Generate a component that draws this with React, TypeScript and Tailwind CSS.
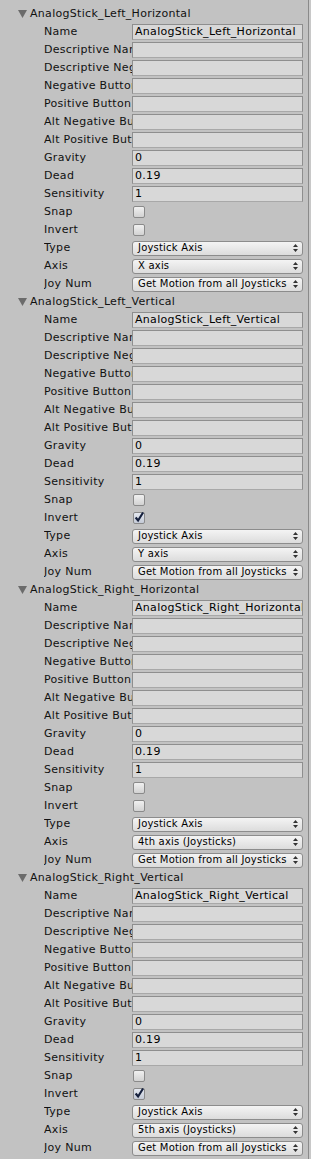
import React from 'react';

type Axis = {
  name: string;
  invert: boolean;
  axis: string;
};

const axes: Axis[] = [
  { name: 'AnalogStick_Left_Horizontal', invert: false, axis: 'X axis' },
  { name: 'AnalogStick_Left_Vertical', invert: true, axis: 'Y axis' },
  { name: 'AnalogStick_Right_Horizontal', invert: false, axis: '4th axis (Joysticks)' },
  { name: 'AnalogStick_Right_Vertical', invert: true, axis: '5th axis (Joysticks)' },
];

// label column clips long names, like the inspector does
const Row: React.FC<{ label: string; children: React.ReactNode }> = ({ label, children }) => (
  <div className="flex h-[18px] items-center pl-[44px]">
    <div className="w-[88px] shrink-0 overflow-hidden whitespace-nowrap tracking-[0.3px]" title={label}>
      {label}
    </div>
    <div className="flex w-[171px] items-center">{children}</div>
  </div>
);

const Field: React.FC<{ value?: string }> = ({ value = '' }) => (
  <div className="h-[16px] w-full overflow-hidden whitespace-nowrap border border-[#8e8e8e] border-b-[#a8a8a8] bg-[#d8d8d8] pl-[2px] leading-[14px] tracking-[0.3px] text-black">
    {value}
  </div>
);

const Check: React.FC<{ on: boolean }> = ({ on }) => (
  <div
    className={
      'ml-px flex h-[12px] w-[12px] items-center justify-center rounded-[2px] border border-[#8a8a8a] bg-gradient-to-b ' +
      (on ? 'from-[#e4e8f0] to-[#c4cad6]' : 'from-[#f0f0f0] to-[#d2d2d2]')
    }
  >
    {on && (
      <svg width="11" height="12" viewBox="0 0 11 12" className="-mt-[2px]">
        <path d="M1.8 6.5 L4.5 9.8 L10 1" fill="none" stroke="#15203d" strokeWidth="2.4" />
      </svg>
    )}
  </div>
);

const Popup: React.FC<{ value: string }> = ({ value }) => (
  <div className="flex h-[15px] w-full items-center justify-between rounded-[3px] border border-[#8c8c8c] bg-gradient-to-b from-[#f4f4f4] to-[#dcdcdc] pl-[5px] pr-[4px] text-[10px] leading-none tracking-[0.2px] text-black">
    <span className="whitespace-nowrap">{value}</span>
    <svg width="5" height="8" viewBox="0 0 5 8">
      <path d="M0 3 L2.5 0 L5 3 Z M0 5 L2.5 8 L5 5 Z" fill="#333" />
    </svg>
  </div>
);

const AxisBlock: React.FC<{ a: Axis }> = ({ a }) => (
  <div>
    <div className="flex h-[18px] items-center pl-[18px]">
      <svg width="9" height="8" viewBox="0 0 9 8" className="mr-[3px]">
        <path d="M0 0 H9 L4.5 8 Z" fill="#6b6b6b" />
      </svg>
      <span className="tracking-[0.3px]">{a.name}</span>
    </div>
    <Row label="Name"><Field value={a.name} /></Row>
    <Row label="Descriptive Name"><Field /></Row>
    <Row label="Descriptive Negative Name"><Field /></Row>
    <Row label="Negative Button"><Field /></Row>
    <Row label="Positive Button"><Field /></Row>
    <Row label="Alt Negative Button"><Field /></Row>
    <Row label="Alt Positive Button"><Field /></Row>
    <Row label="Gravity"><Field value="0" /></Row>
    <Row label="Dead"><Field value="0.19" /></Row>
    <Row label="Sensitivity"><Field value="1" /></Row>
    <Row label="Snap"><Check on={false} /></Row>
    <Row label="Invert"><Check on={a.invert} /></Row>
    <Row label="Type"><Popup value="Joystick Axis" /></Row>
    <Row label="Axis"><Popup value={a.axis} /></Row>
    <Row label="Joy Num"><Popup value="Get Motion from all Joysticks" /></Row>
  </div>
);

const App: React.FC = () => {
  return (
    <div className="flex min-h-[1159px] w-[311px] bg-[#c2c2c2] font-['DejaVu_Sans',sans-serif] text-[11px] text-[#111]">
      <div className="w-[308px] pt-[5px]">
        {axes.map((a) => (
          <AxisBlock key={a.name} a={a} />
        ))}
      </div>
      <div className="w-[3px] border-l border-[#8a8a8a] bg-[#c8c8c8]" />
    </div>
  );
};

export default App;
